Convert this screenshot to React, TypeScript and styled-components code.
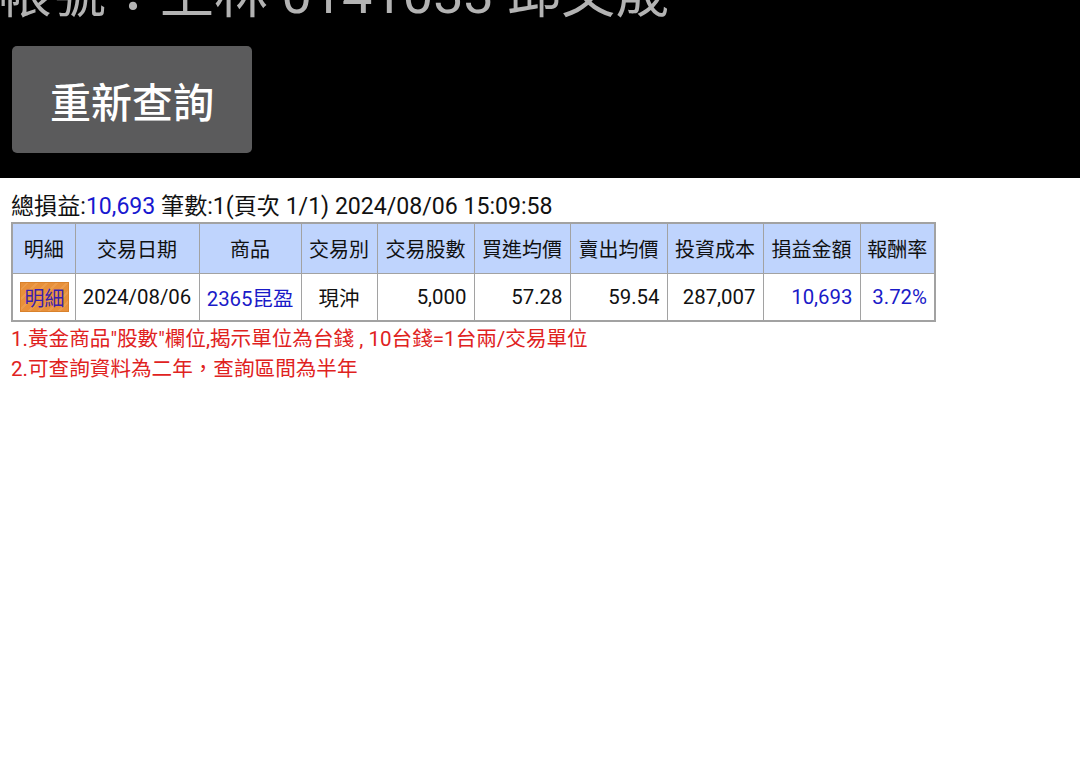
import React from "react";
import styled, { createGlobalStyle } from "styled-components";

const Global = createGlobalStyle`
  html, body { margin: 0; padding: 0; background: #fff; }
  body { font-family: Roboto, "Noto Sans CJK TC", "Noto Sans", sans-serif; }
  *, *::before, *::after { box-sizing: border-box; }
`;

const Header = styled.div`
  background: #000;
  height: 178px;
  overflow: hidden;
  display: flex;
  flex-direction: column;
  align-items: flex-start;
`;

const Account = styled.div`
  color: #b3b3b3;
  font-size: 54px;
  line-height: 54px;
  margin-top: -32px;
  margin-left: -2px;
  white-space: nowrap;
`;

const RequeryButton = styled.button`
  margin: 24px 0 0 12px;
  width: 240px;
  height: 107px;
  background: #5b5b5c;
  color: #fff;
  border: none;
  border-radius: 5px;
  font-family: Roboto, "Noto Sans CJK TC", sans-serif;
  font-size: 41px;
  font-weight: 500;
  display: flex;
  align-items: center;
  justify-content: center;
  padding: 0;
`;

const Content = styled.div`
  padding: 14px 10px;
`;

const Summary = styled.div`
  font-size: 23.1px;
  line-height: 30px;
  color: #111;
  padding-left: 1px;
  white-space: nowrap;
`;

const Blue = styled.span`
  color: #1818d0;
`;

const Table = styled.table`
  border-collapse: collapse;
  border: 2px solid #a2a2a2;
  table-layout: fixed;
  width: 923px;
  margin-left: 1px;
  font-size: 20px;
  color: #111;
`;

const Th = styled.th<{ $w: number }>`
  width: ${(p) => p.$w}px;
  height: 50px;
  background: #bfd4fd;
  border: 1px solid #a2a2a2;
  font-weight: normal;
  padding: 0;
  text-align: center;
  white-space: nowrap;
`;

const Td = styled.td<{ $align?: string; $blue?: boolean }>`
  height: 48px;
  border: 1px solid #a2a2a2;
  padding: 0 7px;
  font-size: 20.4px;
  text-align: ${(p) => p.$align || "center"};
  color: ${(p) => (p.$blue ? "#1a1ac8" : "#111")};
  white-space: nowrap;
`;

const DetailButton = styled.span`
  display: inline-flex;
  align-items: center;
  justify-content: center;
  width: 49px;
  height: 30px;
  margin-top: 1px;
  font-size: 20px;
  color: #3a1fae;
  background: repeating-linear-gradient(
    135deg,
    #e8903a 0px,
    #e8903a 5px,
    #eb9b4c 5px,
    #eb9b4c 7px
  );
  box-shadow: inset 0 0 0 1px #d9822c;
`;

const Notes = styled.div`
  color: #e0221e;
  font-size: 20.6px;
  line-height: 30px;
  margin-top: 2px;
  padding-left: 1px;
  white-space: nowrap;
`;

const headers: [string, number][] = [
  ["明細", 63],
  ["交易日期", 124],
  ["商品", 102],
  ["交易別", 76],
  ["交易股數", 97],
  ["買進均價", 96],
  ["賣出均價", 97],
  ["投資成本", 96],
  ["損益金額", 97],
  ["報酬率", 75],
];

export default function App() {
  return (
    <>
      <Global />
      <Header>
        <Account>帳號：上林 0141033 邱文晟</Account>
        <RequeryButton>重新查詢</RequeryButton>
      </Header>
      <Content>
        <Summary>
          總損益:<Blue>10,693</Blue> 筆數:1(頁次 1/1) 2024/08/06 15:09:58
        </Summary>
        <Table>
          <thead>
            <tr>
              {headers.map(([h, w]) => (
                <Th key={h} $w={w}>
                  {h}
                </Th>
              ))}
            </tr>
          </thead>
          <tbody>
            <tr>
              <Td>
                <DetailButton>明細</DetailButton>
              </Td>
              <Td>2024/08/06</Td>
              <Td $blue>2365昆盈</Td>
              <Td>現沖</Td>
              <Td $align="right">5,000</Td>
              <Td $align="right">57.28</Td>
              <Td $align="right">59.54</Td>
              <Td $align="right">287,007</Td>
              <Td $align="right" $blue>
                10,693
              </Td>
              <Td $align="right" $blue>
                3.72%
              </Td>
            </tr>
          </tbody>
        </Table>
        <Notes>
          <div>1.黃金商品"股數"欄位,揭示單位為台錢 , 10台錢=1台兩/交易單位</div>
          <div>2.可查詢資料為二年，查詢區間為半年</div>
        </Notes>
      </Content>
    </>
  );
}
